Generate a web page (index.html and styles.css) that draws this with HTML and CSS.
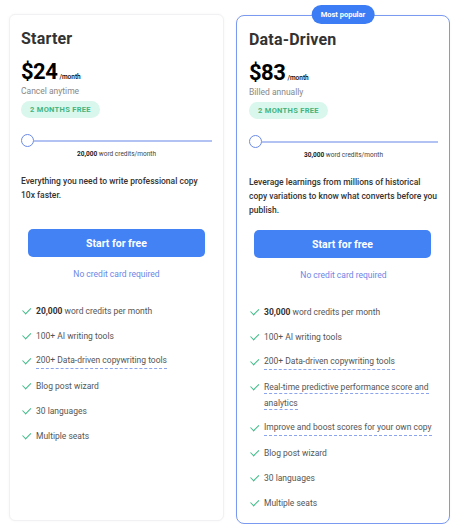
FILE: index.html
```html
<!DOCTYPE html>
<html>
<head>
<meta charset="utf-8">
<link rel="stylesheet" href="styles.css">
</head>
<body>
<div class="plans">
  <div class="card">
    <h2 class="title">Starter</h2>
    <div class="price"><span class="amount">$24</span><span class="per">/month</span></div>
    <div class="note">Cancel anytime</div>
    <div class="badge">2 MONTHS FREE</div>
    <div class="slider"><span class="knob"></span><span class="track"></span></div>
    <div class="credits"><b>20,000</b> word credits/month</div>
    <p class="desc">Everything you need to write professional copy 10x faster.</p>
    <button class="cta">Start for free</button>
    <div class="nocc">No credit card required</div>
    <ul class="features">
      <li><span class="check"></span><span class="ft"><b>20,000</b> word credits per month</span></li>
      <li><span class="check"></span><span class="ft">100+ AI writing tools</span></li>
      <li><span class="check"></span><span class="ft dashed">200+ Data-driven copywriting tools</span></li>
      <li><span class="check"></span><span class="ft">Blog post wizard</span></li>
      <li><span class="check"></span><span class="ft">30 languages</span></li>
      <li><span class="check"></span><span class="ft">Multiple seats</span></li>
    </ul>
  </div>
  <div class="card popular">
    <div class="pop-badge">Most popular</div>
    <h2 class="title">Data-Driven</h2>
    <div class="price"><span class="amount">$83</span><span class="per">/month</span></div>
    <div class="note">Billed annually</div>
    <div class="badge">2 MONTHS FREE</div>
    <div class="slider"><span class="knob"></span><span class="track"></span></div>
    <div class="credits"><b>30,000</b> word credits/month</div>
    <p class="desc">Leverage learnings from millions of historical copy variations to know what converts before you publish.</p>
    <button class="cta">Start for free</button>
    <div class="nocc">No credit card required</div>
    <ul class="features">
      <li><span class="check"></span><span class="ft"><b>30,000</b> word credits per month</span></li>
      <li><span class="check"></span><span class="ft">100+ AI writing tools</span></li>
      <li><span class="check"></span><span class="ft dashed">200+ Data-driven copywriting tools</span></li>
      <li><span class="check"></span><span class="ft"><span class="dashed">Real-time predictive performance score and analytics</span></span></li>
      <li><span class="check"></span><span class="ft dashed">Improve and boost scores for your own copy</span></li>
      <li><span class="check"></span><span class="ft">Blog post wizard</span></li>
      <li><span class="check"></span><span class="ft">30 languages</span></li>
      <li><span class="check"></span><span class="ft">Multiple seats</span></li>
    </ul>
  </div>
</div>
</body>
</html>
```
FILE: styles.css
```css
* { box-sizing: border-box; }
html, body { margin: 0; padding: 0; background: #fff; }
body { font-family: Roboto, "Liberation Sans", sans-serif; color: #333; }
.plans {
  display: flex;
  gap: 12px;
  padding: 14px 0 0 9px;
  align-items: flex-start;
}
.card {
  position: relative;
  width: 215px;
  height: 507px;
  border: 1px solid #f1f1f4;
  border-radius: 6px;
  box-shadow: 0 0 3px rgba(0,0,0,0.04);
  padding: 14px 11px 0 11px;
  background: #fff;
}
.card.popular {
  width: 214px;
  height: 509px;
  margin-top: 1px;
  border: 1.5px solid #7a99f0;
  border-radius: 8px;
  padding: 14px 11px 0 12px;
}
.pop-badge {
  position: absolute;
  top: -11px;
  left: 50%;
  transform: translateX(-50%);
  background: #3c7cf4;
  color: #fff;
  font-size: 7.5px;
  font-weight: 700;
  line-height: 19px;
  height: 19px;
  padding: 0 9px;
  border-radius: 10px;
  white-space: nowrap;
}
.title {
  margin: 0;
  font-size: 16px;
  line-height: 20px;
  font-weight: 700;
  color: #333;
  letter-spacing: 0.2px;
}
.price { margin-top: 10px; line-height: 26px; height: 26px; color: #000; }
.amount { font-size: 22px; font-weight: 700; letter-spacing: -0.5px; }
.per { font-size: 6.5px; font-weight: 500; margin-left: 2px; }
.note { font-size: 8.5px; line-height: 12px; color: #888; }
.badge {
  display: inline-block;
  margin-top: 4px;
  background: #d9f7ec;
  color: #43b37f;
  font-size: 7.5px;
  font-weight: 700;
  letter-spacing: 0.3px;
  height: 17px;
  line-height: 17px;
  padding: 0 9px;
  border-radius: 9px;
}
.slider {
  display: flex;
  align-items: center;
  margin-top: 16px;
  height: 13px;
}
.knob {
  width: 13px;
  height: 13px;
  border: 1.5px solid #6b8ae6;
  border-radius: 50%;
  background: #fff;
  flex: none;
}
.track { flex: 1; height: 2px; background: #b2c2f3; }
.credits {
  margin-top: 2px;
  text-align: center;
  font-size: 6.5px;
  line-height: 10px;
  color: #444;
}
.credits b { font-weight: 700; color: #222; }
.desc {
  margin: 15px 0 0 0;
  height: 42px;
  font-size: 8.5px;
  line-height: 14px;
  font-weight: 500;
  color: #333;
}
.cta {
  display: block;
  width: calc(100% - 14px);
  margin: 13px 7px 0 7px;
  height: 28px;
  border: 0;
  border-radius: 5px;
  background: #4282f5;
  color: #fff;
  font-family: inherit;
  font-size: 10.5px;
  font-weight: 700;
}
.popular .cta { width: calc(100% - 12px); margin-left: 5px; }
.nocc {
  margin-top: 11px;
  text-align: center;
  font-size: 8.5px;
  line-height: 12px;
  color: #6c86e6;
}
.features {
  list-style: none;
  margin: 23px 0 0 0;
  padding: 0;
  display: flex;
  flex-direction: column;
  gap: 9px;
}
.features li {
  display: flex;
  align-items: flex-start;
  font-size: 8.5px;
  line-height: 16px;
  color: #555;
}
.features b { font-weight: 700; color: #333; }
.check {
  flex: none;
  width: 8px;
  height: 5px;
  margin: 5px 6px 0 1px;
  border-left: 1.6px solid #3fbb88;
  border-bottom: 1.6px solid #3fbb88;
  transform: rotate(-45deg) translate(1px, 0);
}
.dashed {
  border-bottom: 1px dashed #8ca4ee;
  padding-bottom: 1px;
}
.ft.dashed { display: inline-block; line-height: 14px; }
```
